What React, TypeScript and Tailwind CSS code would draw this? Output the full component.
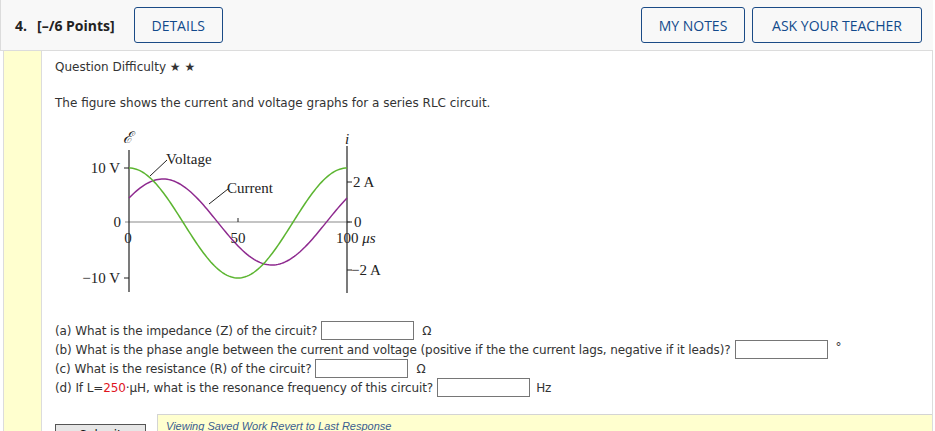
import React from "react";

const T0 = 129;
const T1 = 347;
const P = T1 - T0;

function curve(amp: number, mid: number, phase: number) {
  const pts: string[] = [];
  for (let i = 0; i <= 120; i++) {
    const x = T0 + (P * i) / 120;
    const y = mid - amp * Math.cos((2 * Math.PI * (x - T0)) / P - phase);
    pts.push(`${x.toFixed(2)},${y.toFixed(2)}`);
  }
  return "M" + pts.join(" L");
}

function Figure() {
  const serif = { fontFamily: '"Liberation Serif", "DejaVu Serif", serif' };
  return (
    <svg width="360" height="175" viewBox="70 128 360 175" className="block">
      {/* axes */}
      <line x1="125" y1="222" x2="350" y2="222" stroke="#8a8a8a" strokeWidth="1.2" />
      <line x1="129" y1="150" x2="129" y2="292" stroke="#222" strokeWidth="1.2" />
      <line x1="347" y1="146" x2="347" y2="293" stroke="#222" strokeWidth="1.2" />
      {/* ticks */}
      <line x1="124" y1="168" x2="129" y2="168" stroke="#222" />
      <line x1="124" y1="278" x2="129" y2="278" stroke="#222" />
      <line x1="347" y1="182" x2="352" y2="182" stroke="#222" />
      <line x1="347" y1="222" x2="352" y2="222" stroke="#222" />
      <line x1="347" y1="270" x2="352" y2="270" stroke="#222" />
      <line x1="238" y1="218" x2="238" y2="222" stroke="#222" />
      {/* curves */}
      <path d={curve(43, 222, 0.98)} fill="none" stroke="#8e2a8f" strokeWidth="1.5" />
      <path d={curve(55, 223, 0)} fill="none" stroke="#5cb531" strokeWidth="1.5" />
      {/* leaders */}
      <line x1="150" y1="176" x2="167" y2="160" stroke="#222" strokeWidth="1" />
      <line x1="209" y1="204" x2="228" y2="189" stroke="#222" strokeWidth="1" />
      {/* labels */}
      <g style={serif} fill="#222" fontSize="15">
        <text x="128" y="143" textAnchor="middle" fontStyle="italic" fontSize="16" style={{ fontFamily: '"DejaVu Serif", serif' }}>ℰ</text>
        <text x="166" y="164">Voltage</text>
        <text x="227" y="193">Current</text>
        <text x="120" y="173" textAnchor="end">10 V</text>
        <text x="121" y="227" textAnchor="end">0</text>
        <text x="128" y="243" textAnchor="middle">0</text>
        <text x="120" y="283" textAnchor="end">−10 V</text>
        <text x="238" y="243" textAnchor="middle">50</text>
        <text x="347" y="144" textAnchor="middle" fontStyle="italic">i</text>
        <text x="353" y="187">2 A</text>
        <text x="354" y="227">0</text>
        <text x="336" y="243">100 <tspan fontStyle="italic">μs</tspan></text>
        <text x="351" y="275">−2 A</text>
      </g>
    </svg>
  );
}

function Box({ w = 93 }: { w?: number }) {
  return (
    <span
      className="inline-block h-[19px] border border-[#767676] bg-white shrink-0"
      style={{ width: w }}
    />
  );
}

export default function App() {
  const verdana = { fontFamily: '"DejaVu Sans", Verdana, sans-serif' };
  return (
    <div className="w-[935px] h-[431px] overflow-hidden bg-white">
      <div className="w-[933px] h-full flex flex-col">
        <header
          className="flex items-center h-[51px] bg-[#f8f8f8] border-b border-l border-[#dcdcdc] pl-[14px] pr-[11px] shrink-0"
          style={{ fontFamily: '"Open Sans", sans-serif' }}
        >
          <span className="text-[14px] font-bold text-[#222]">4.</span>
          <span className="ml-[10px] text-[14px] font-bold text-[#222]">[–/6 Points]</span>
          <button className="ml-[19px] h-[36px] w-[89px] rounded-[3px] border border-[#1b4b86] text-[14px] font-medium text-[#124a8c] bg-transparent">
            DETAILS
          </button>
          <div className="flex-1" />
          <button className="h-[36px] w-[104px] rounded-[3px] border border-[#1b4b86] text-[14px] font-medium text-[#124a8c] bg-transparent">
            MY NOTES
          </button>
          <button className="ml-[7px] h-[36px] w-[170px] rounded-[3px] border border-[#1b4b86] text-[14px] font-medium text-[#124a8c] bg-transparent">
            ASK YOUR TEACHER
          </button>
        </header>
        <div className="flex flex-1 min-h-0">
          <div className="ml-[3px] w-[39px] bg-[#ffffcf] border-x border-[#dcdcdc] shrink-0" />
          <div
            className="flex-1 border-r border-[#dcdcdc] pl-[13px] text-[12px] text-[#333]"
            style={verdana}
          >
            <div className="mt-[7px] leading-[18px]">Question Difficulty ★ ★</div>
            <div className="mt-[18px] leading-[18px]">
              The figure shows the current and voltage graphs for a series RLC circuit.
            </div>
            <div className="mt-[16px] ml-[15px]">
              <Figure />
            </div>
            <div className="mt-[18px] tracking-[-0.1px]">
              <div className="flex items-center h-[19px] gap-[4px]">
                <span>(a) What is the impedance (Z) of the circuit?</span>
                <Box />
                <span className="ml-[4px]">Ω</span>
              </div>
              <div className="flex items-center h-[19px] gap-[4px]">
                <span>
                  (b) What is the phase angle between the current and voltage (positive if the the current lags, negative if it leads)?
                </span>
                <Box />
                <span className="ml-[4px] -mt-[6px]">°</span>
              </div>
              <div className="flex items-center h-[19px] gap-[4px]">
                <span>(c) What is the resistance (R) of the circuit?</span>
                <Box />
                <span className="ml-[4px]">Ω</span>
              </div>
              <div className="flex items-center h-[19px] gap-[4px]">
                <span>
                  (d) If L=<span className="text-[#e0141e]">250</span>·μH, what is the resonance frequency of this circuit?
                </span>
                <Box />
                <span className="ml-[2px]">Hz</span>
              </div>
            </div>
            <div className="mt-[17px] flex items-start">
              <button className="mt-[10px] w-[91px] h-[22px] bg-[#e6e6e6] border border-[#555] text-[12px] text-[#111] leading-[20px] shrink-0">
                Submit Answer
              </button>
              <div
                className="ml-[11px] flex-1 h-[30px] bg-[#ffffcf] border-t border-l border-[#d4d4d4] pl-[8px] pt-[3px] text-[11px] italic text-[#3a5d8f]"
                style={{ fontFamily: '"Liberation Sans", Arial, sans-serif' }}
              >
                Viewing Saved Work Revert to Last Response
              </div>
            </div>
          </div>
        </div>
      </div>
    </div>
  );
}
